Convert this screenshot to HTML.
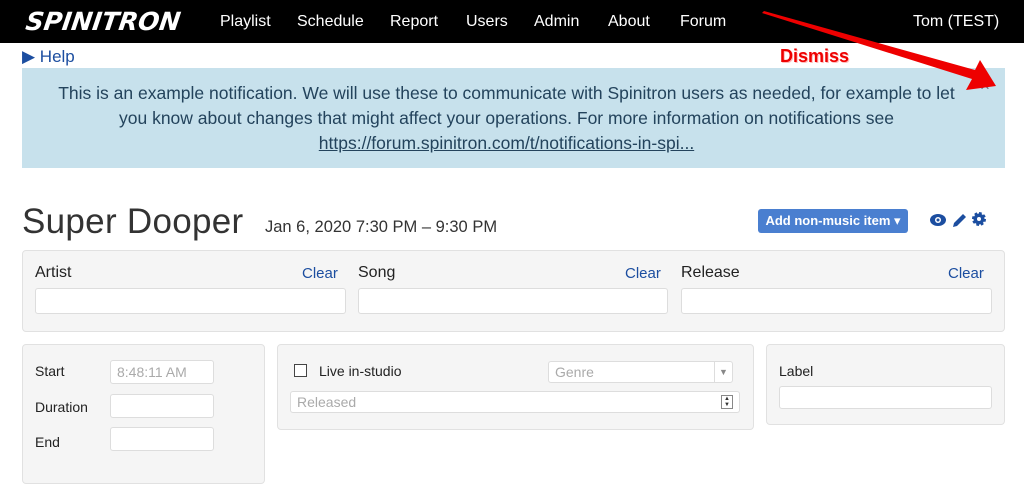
<!DOCTYPE html>
<html><head><style>
*{box-sizing:border-box}
body{margin:0;width:1024px;height:471px;overflow:hidden;background:#fff;font-family:"Liberation Sans","DejaVu Sans",sans-serif;color:#333}
.nav{position:absolute;left:0;top:0;width:1024px;height:43px;background:#000}
.logo{position:absolute;left:26px;top:7px;color:#fff;font:italic 900 25px "DejaVu Sans",sans-serif;letter-spacing:0;transform:skewX(-8deg)}
.nav a{position:absolute;top:13px;color:#fff;font-size:16px}
.abs{position:absolute}
.note{position:absolute;left:22px;top:68px;width:983px;height:100px;background:#c7e1ec;color:#23435c;font-size:17.5px;line-height:25px;text-align:center;padding:13px 30px 0 16px}
.panel{position:absolute;background:#f5f5f5;border:1px solid #e1e1e1;border-radius:4px}
.inp{position:absolute;background:#fff;border:1px solid #ddd;border-radius:3px;height:26px}
.lbl{position:absolute;font-size:16px;color:#222}
.clr{position:absolute;font-size:15px;color:#1c4ea0}
.ph{color:#aaa;font-size:14px;padding:4px 6px}
</style></head><body>
<div class="nav">
<div class="logo">SPINITRON</div>
<a style="left:220px">Playlist</a><a style="left:297px">Schedule</a><a style="left:390px">Report</a><a style="left:466px">Users</a><a style="left:534px">Admin</a><a style="left:608px">About</a><a style="left:680px">Forum</a><a style="left:913px">Tom (TEST)</a>
</div>
<div class="abs" style="left:22px;top:47px;color:#1c4ea0;font-size:17px">▶ Help</div>
<div class="note">This is an example notification. We will use these to communicate with Spinitron users as needed, for example to let<br>you know about changes that might affect your operations. For more information on notifications see <u>https://forum.spinitron.com/t/notifications-in-spi...</u></div>
<div class="abs" style="left:980px;top:76px;color:#667;font-size:17px">×</div>
<div class="abs" style="left:780px;top:46px;color:#e00;font-weight:bold;font-size:18px;text-shadow:1px 1px 0 #fbb">Dismiss</div>
<svg class="abs" style="left:0;top:0" width="1024" height="120"><polygon points="762,13 764,11 975,70 980,60 996,86 966,90 972,79" fill="#e00"/></svg>
<div class="abs" style="left:22px;top:202px;font-size:35px;color:#333;letter-spacing:0.3px">Super Dooper</div>
<div class="abs" style="left:265px;top:218px;font-size:16.5px;color:#333">Jan 6, 2020 7:30 PM – 9:30 PM</div>
<div class="abs" style="left:758px;top:209px;width:150px;height:24px;background:#4a7fd0;border-radius:3px;color:#fff;font-size:13px;font-weight:bold;line-height:24px;text-align:center">Add non-music item ▾</div>
<svg class="abs" style="left:929px;top:211px" width="60" height="18"><ellipse cx="9" cy="9" rx="8" ry="6" fill="#1c4ea0"/><circle cx="9" cy="9" r="3" fill="#fff"/><circle cx="9" cy="9" r="1.5" fill="#1c4ea0"/><path d="M24 16 L25 12 L34 3 L37 6 L28 15 Z" fill="#1c4ea0"/><circle cx="50" cy="8" r="5.5" fill="#1c4ea0" stroke="#1c4ea0" stroke-width="3" stroke-dasharray="2.5 1.8"/><circle cx="50" cy="8" r="2" fill="#fff"/></svg>
<div class="panel" style="left:22px;top:250px;width:983px;height:82px"></div>
<div class="lbl" style="left:35px;top:264px">Artist</div><div class="clr" style="left:302px;top:265px">Clear</div><div class="inp" style="left:35px;top:288px;width:311px"></div>
<div class="lbl" style="left:358px;top:264px">Song</div><div class="clr" style="left:625px;top:265px">Clear</div><div class="inp" style="left:358px;top:288px;width:310px"></div>
<div class="lbl" style="left:681px;top:264px">Release</div><div class="clr" style="left:948px;top:265px">Clear</div><div class="inp" style="left:681px;top:288px;width:311px"></div>
<div class="panel" style="left:22px;top:344px;width:243px;height:140px"></div>
<div class="lbl" style="left:35px;top:363px;font-size:14px">Start</div><div class="inp ph" style="left:110px;top:360px;width:104px;height:24px;padding-top:3px">8:48:11 AM</div>
<div class="lbl" style="left:35px;top:399px;font-size:14px">Duration</div><div class="inp" style="left:110px;top:394px;width:104px;height:24px"></div>
<div class="lbl" style="left:35px;top:434px;font-size:14px">End</div><div class="inp" style="left:110px;top:427px;width:104px;height:24px"></div>
<div class="panel" style="left:277px;top:344px;width:477px;height:86px"></div>
<div class="abs" style="left:294px;top:364px;width:13px;height:13px;border:1px solid #444;background:#fff"></div>
<div class="lbl" style="left:319px;top:363px;font-size:14px">Live in-studio</div>
<div class="inp ph" style="left:548px;top:361px;width:185px;height:22px;padding-top:2px">Genre<span style="position:absolute;right:0;top:0;width:18px;height:20px;border-left:1px solid #ddd;font-size:9px;text-align:center;line-height:20px;color:#888">▼</span></div>
<div class="inp ph" style="left:290px;top:391px;width:450px;height:22px;padding-top:2px">Released<span style="position:absolute;right:6px;top:3px;width:12px;height:14px;border:1px solid #888;font-size:6px;line-height:6px;text-align:center;color:#333">▲<br>▼</span></div>
<div class="panel" style="left:766px;top:344px;width:239px;height:81px"></div>
<div class="lbl" style="left:779px;top:363px;font-size:14px">Label</div>
<div class="inp" style="left:779px;top:386px;width:213px;height:23px"></div>
</body></html>
